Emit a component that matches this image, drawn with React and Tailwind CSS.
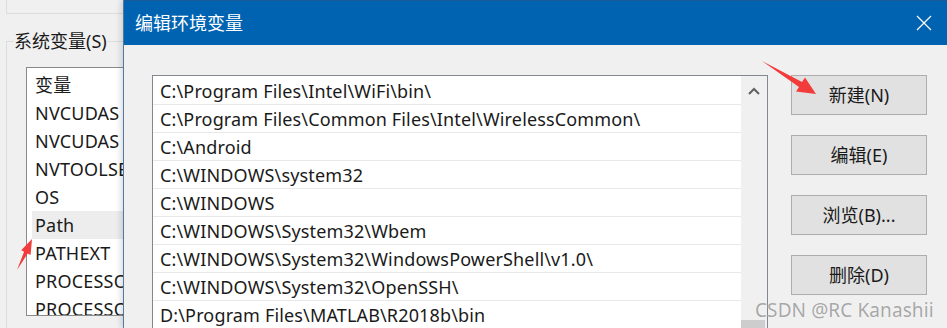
import React from 'react';

const FONT = { fontFamily: '"Noto Sans", "Noto Sans CJK SC", sans-serif' };

const sysVars = ['NVCUDAS', 'NVCUDAS', 'NVTOOLSE', 'OS', 'Path', 'PATHEXT', 'PROCESSOR', 'PROCESSOR'];

const paths = [
  'C:\\Program Files\\Intel\\WiFi\\bin\\',
  'C:\\Program Files\\Common Files\\Intel\\WirelessCommon\\',
  'C:\\Android',
  'C:\\WINDOWS\\system32',
  'C:\\WINDOWS',
  'C:\\WINDOWS\\System32\\Wbem',
  'C:\\WINDOWS\\System32\\WindowsPowerShell\\v1.0\\',
  'C:\\WINDOWS\\System32\\OpenSSH\\',
  'D:\\Program Files\\MATLAB\\R2018b\\bin',
];

const buttons = ['新建(N)', '编辑(E)', '浏览(B)...', '删除(D)'];

const App = () => {
  return (
    <div
      className="relative flex w-[947px] h-[328px] overflow-hidden bg-[#f0f0f0] text-[18px] text-[#1a1a1a]"
      style={FONT}
    >
      {/* --- background window (system variables) --- */}
      <div className="w-[123px] shrink-0 overflow-hidden">
        <div className="w-[300px]">
          <div className="h-[14px] ml-[6px] border-l border-b border-[#dcdcdc]" />
          <fieldset className="mt-[14px] ml-[6px] border-l border-t border-[#dcdcdc] h-[300px]">
            <legend className="ml-[6px] px-[1px] leading-[26px]">系统变量(S)</legend>
            <div className="ml-[19px] mt-[13px] w-[220px] h-[249px] bg-white border border-[#8a8a8a] overflow-hidden">
              <div className="ml-[5px] pt-[3px] tracking-[0.2px]">
                <div className="h-[28px] leading-[28px] pl-[3px]">变量</div>
                {sysVars.map((v, i) => (
                  <div
                    key={i}
                    className={`h-[28px] leading-[29px] pl-[3px] ${v === 'Path' ? 'bg-[#ededed]' : ''}`}
                  >
                    {v}
                  </div>
                ))}
              </div>
            </div>
          </fieldset>
        </div>
      </div>

      {/* --- edit env dialog --- */}
      <div className="flex-1 flex flex-col border-l border-[#4f79a6] shadow-[-2px_0_6px_rgba(0,0,0,0.15)]">
        <div className="h-[45px] shrink-0 flex items-center justify-between bg-[#0063b1] border-t border-[#1a5a98] text-white">
          <span className="pl-[11px]">编辑环境变量</span>
          <svg width="16" height="16" viewBox="0 0 16 16" className="mr-[15px]">
            <path d="M1 1 L15 15 M15 1 L1 15" stroke="#fff" strokeWidth="1.3" fill="none" />
          </svg>
        </div>

        <div className="flex flex-1 pt-[30px] pl-[28px] gap-[23px]">
          <div className="flex w-[616px] h-[270px] bg-white border border-[#828790] overflow-hidden">
            <div className="flex-1 pt-[1px] tracking-[0.15px]">
              {paths.map((p, i) => (
                <div
                  key={i}
                  className="h-[28px] leading-[29px] pl-[7px] border-b border-[#e8e8e8] whitespace-nowrap"
                >
                  {p}
                </div>
              ))}
            </div>
            <div className="w-[26px] shrink-0 flex flex-col items-center bg-[#f0f0f0]">
              <svg width="14" height="10" viewBox="0 0 14 10" className="mt-[10px]">
                <path d="M2 8 L7 3 L12 8" stroke="#606060" strokeWidth="2" fill="none" />
              </svg>
              <div className="mt-auto w-[24px] h-[24px] mr-[2px] bg-[#cdcdcd]" />
            </div>
          </div>

          <div className="flex flex-col gap-[20px]">
            {buttons.map((b) => (
              <div
                key={b}
                className="w-[136px] h-[40px] flex items-center justify-center pt-[1px] bg-[#e1e1e1] border border-[#adadad]"
              >
                {b}
              </div>
            ))}
          </div>
        </div>
      </div>

      {/* --- annotation arrows --- */}
      <svg className="absolute left-0 top-0 pointer-events-none" width="947" height="328">
        <polygon
          points="762,61 802,82 805,77.5 816,94 796,91.5 799,87"
          fill="#f23b3b"
        />
        <polygon
          points="17,270 27.7,253.5 30.6,255 32,239 21.2,250.2 24.1,251.7"
          fill="#f23b3b"
        />
      </svg>

      {/* --- watermark --- */}
      <div
        className="absolute left-[755px] top-[296px] text-[19px] leading-[28px] tracking-[0.1px] text-[rgba(130,130,130,0.7)] whitespace-nowrap"
        style={{ textShadow: '0 0 1px rgba(255,255,255,0.8)' }}
      >
        CSDN @RC Kanashii
      </div>
    </div>
  );
};

export default App;
